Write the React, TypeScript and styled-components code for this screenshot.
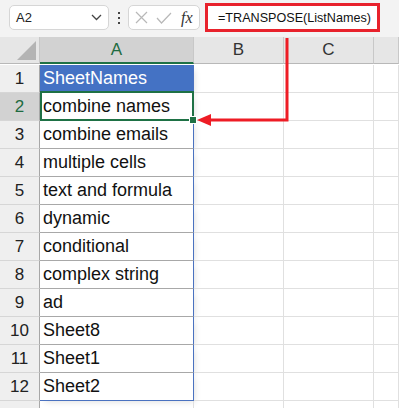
import React from 'react';
import styled, { createGlobalStyle } from 'styled-components';

const GlobalStyle = createGlobalStyle`
  html, body {
    margin: 0;
    padding: 0;
    background: #ffffff;
  }
  body {
    font-family: "Liberation Sans", Arial, sans-serif;
    width: 399px;
    height: 408px;
    overflow: hidden;
  }
`;

const Page = styled.div`
  position: relative;
  width: 399px;
  height: 408px;
  overflow: hidden;
  background: #fff;
`;

const Toolbar = styled.div`
  display: flex;
  align-items: center;
  height: 37px;
  padding: 0 0 2px 9px;
  box-sizing: border-box;
  background: #f3f3f3;
`;

const NameBox = styled.div`
  display: flex;
  align-items: center;
  justify-content: space-between;
  width: 100px;
  height: 25px;
  box-sizing: border-box;
  padding: 0 6px 0 6px;
  background: #fff;
  border: 1px solid #d6d6d6;
  border-radius: 5px;
  font-size: 13px;
  color: #222;
`;

const Dots = styled.div`
  display: flex;
  flex-direction: column;
  gap: 3px;
  margin: 0 8px 0 9px;
  span {
    width: 2px;
    height: 2px;
    background: #444;
  }
`;

const FxBox = styled.div`
  display: flex;
  align-items: center;
  width: 72px;
  height: 25px;
  box-sizing: border-box;
  padding: 0 4px 0 6px;
  gap: 8px;
  background: #fff;
  border: 1px solid #d6d6d6;
  border-radius: 5px;
`;

const Fx = styled.span`
  font-family: "Liberation Serif", "Times New Roman", serif;
  font-style: italic;
  font-size: 16px;
  color: #333;
  margin-left: 1px;
`;

const FormulaInput = styled.div`
  display: flex;
  align-items: center;
  margin-left: 5px;
  width: 175px;
  height: 29px;
  box-sizing: border-box;
  padding-left: 10px;
  background: #fff;
  border: 3px solid #e8222c;
  font-size: 12.6px;
  color: #111;
  white-space: nowrap;
`;

const Grid = styled.div`
  display: grid;
  grid-template-columns: 40px 154px 90px 90px 1fr;
  grid-auto-rows: 28px;
`;

const Corner = styled.div`
  position: relative;
  height: 27px;
  background: #e6e6e6;
  border-right: 1px solid #c8c8c8;
  border-bottom: 1px solid #b8b8b8;
  box-sizing: border-box;
  &::after {
    content: '';
    position: absolute;
    right: 3px;
    bottom: 3px;
    border-style: solid;
    border-width: 0 0 19px 19px;
    border-color: transparent transparent #b4b4b4 transparent;
  }
`;

const ColHead = styled.div<{ $active?: boolean }>`
  display: flex;
  align-items: center;
  justify-content: center;
  height: 27px;
  box-sizing: border-box;
  font-size: 17px;
  background: ${p => (p.$active ? '#d2d2d2' : '#e6e6e6')};
  color: ${p => (p.$active ? '#1e6b41' : '#333')};
  border-right: 1px solid #c8c8c8;
  border-bottom: ${p => (p.$active ? '2px solid #1e7145' : '1px solid #b8b8b8')};
`;

const RowHead = styled.div<{ $active?: boolean }>`
  display: flex;
  align-items: center;
  justify-content: center;
  box-sizing: border-box;
  font-size: 17px;
  background: ${p => (p.$active ? '#d2d2d2' : '#efefef')};
  color: ${p => (p.$active ? '#1e6b41' : '#222')};
  border-right: 1px solid #a8a8a8;
  border-bottom: 1px solid #d6d6d6;
`;

const Cell = styled.div<{ $head?: boolean; $last?: boolean }>`
  display: flex;
  align-items: center;
  padding-left: 3px;
  box-sizing: border-box;
  font-size: 18px;
  white-space: nowrap;
  background: ${p => (p.$head ? '#4472c4' : '#fff')};
  color: ${p => (p.$head ? '#fff' : '#111')};
  border-right: 1px solid #4a72c0;
  border-bottom: 1px solid ${p => (p.$last ? '#4a72c0' : '#a9a9a9')};
  box-shadow: 3px 3px 6px -2px rgba(0, 0, 0, 0.12);
`;

const Blank = styled.div`
  box-sizing: border-box;
  border-right: 1px solid #e0e0e0;
  border-bottom: 1px solid #e0e0e0;
`;

const Selected = styled.div`
  position: absolute;
  left: 40px;
  top: 91px;
  width: 154px;
  height: 30px;
  box-sizing: border-box;
  border: 2px solid #1e7145;
  pointer-events: none;
  &::after {
    content: '';
    position: absolute;
    right: -5px;
    bottom: -5px;
    width: 6px;
    height: 6px;
    background: #1e7145;
    border: 1px solid #fff;
  }
`;

const Annotation = styled.svg`
  position: absolute;
  left: 0;
  top: 0;
  pointer-events: none;
`;

const names = [
  'SheetNames',
  'combine names',
  'combine emails',
  'multiple cells',
  'text and formula',
  'dynamic',
  'conditional',
  'complex string',
  'ad',
  'Sheet8',
  'Sheet1',
  'Sheet2',
];

export default function App() {
  return (
    <Page>
      <GlobalStyle />
      <Toolbar>
        <NameBox>
          <span>A2</span>
          <svg width="11" height="7" viewBox="0 0 11 7">
            <path d="M1 1l4.5 4.5L10 1" fill="none" stroke="#444" strokeWidth="1.3" />
          </svg>
        </NameBox>
        <Dots>
          <span />
          <span />
          <span />
        </Dots>
        <FxBox>
          <svg width="13" height="13" viewBox="0 0 13 13">
            <path d="M1 1l11 11M12 1L1 12" stroke="#b8b8b8" strokeWidth="1.2" />
          </svg>
          <svg width="16" height="12" viewBox="0 0 16 12">
            <path d="M1 6l4.5 5L15 1" fill="none" stroke="#b8b8b8" strokeWidth="1.2" />
          </svg>
          <Fx>fx</Fx>
        </FxBox>
        <FormulaInput>=TRANSPOSE(ListNames)</FormulaInput>
      </Toolbar>
      <Grid>
        <Corner />
        <ColHead $active>A</ColHead>
        <ColHead>B</ColHead>
        <ColHead>C</ColHead>
        <ColHead />
        {names.map((n, i) => (
          <React.Fragment key={i}>
            <RowHead $active={i === 1}>{i + 1}</RowHead>
            <Cell $head={i === 0} $last={i === names.length - 1}>{n}</Cell>
            <Blank />
            <Blank />
            <Blank />
          </React.Fragment>
        ))}
        <RowHead />
        <Blank />
        <Blank />
        <Blank />
        <Blank />
      </Grid>
      <Selected />
      <Annotation width="399" height="408" viewBox="0 0 399 408">
        <path d="M287 38V120H208" fill="none" stroke="#ee1c25" strokeWidth="3" />
        <path d="M197 120L211 114V126Z" fill="#ee1c25" />
      </Annotation>
    </Page>
  );
}
